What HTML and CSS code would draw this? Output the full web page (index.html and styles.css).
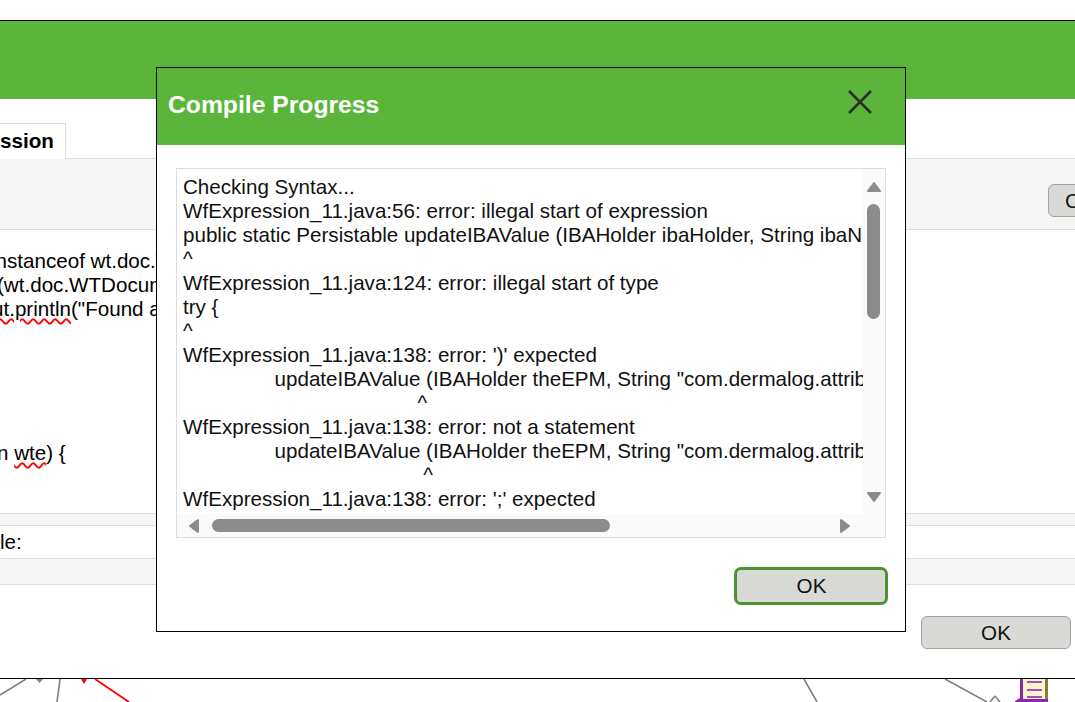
FILE: index.html
```html
<!DOCTYPE html>
<html lang="en">
<head>
<meta charset="utf-8">
<title>Compile Progress</title>
<link rel="stylesheet" href="styles.css">
</head>
<body>
<div class="page">
  <div class="window">
    <div class="banner"></div>
    <div class="tabs"><div class="tab">ssion</div></div>
    <div class="toolbar"><button class="btn btn-check">C</button></div>
    <div class="editor">
      <div class="code-line l1">instanceof wt.doc.WTDocument) {</div>
      <div class="code-line l2">(wt.doc.WTDocument)primaryBusinessObject;</div>
      <div class="code-line l3"><span class="spell">ut.println</span>("Found a document");</div>
      <div class="code-line"></div>
      <div class="code-line"></div>
      <div class="code-line"></div>
      <div class="code-line"></div>
      <div class="code-line"></div>
      <div class="code-line l4">n <span class="spell">wte</span>) {</div>
    </div>
    <div class="strip"></div>
    <div class="file-row"><span class="file-label">le:</span></div>
    <div class="strip2"></div>
    <div class="actions"><button class="btn btn-ok">OK</button></div>
  </div>
  <svg class="diagram" viewBox="0 0 1075 23" width="1075" height="23" aria-hidden="true">
    <g fill="none" stroke="#808080" stroke-width="1.6">
      <path d="M0 16 26 0"/>
      <path d="M60 0 57 23"/>
      <path d="M804 0 817 23"/>
      <path d="M945 0 987 23"/>
      <path d="M995 17 990 23M995 17 1000 23"/>
    </g>
    <path d="M36 0h7l-3.500 4z" fill="#808080"/>
    <path d="M81 0h6l-3 5z" fill="#f00"/>
    <path d="M95 0 129 23" fill="none" stroke="#f00" stroke-width="1.800"/>
    <path d="M1020 0h28v23h-33v-1l5-3z" fill="#8a2aa8"/>
    <path d="M1023 0h22v20h-22z" fill="#fbf6c8"/>
    <path d="M1045 0h3v20h-3z" fill="#8b7a3c"/>
    <path d="M1027 3h15M1027 11h15M1027 18h15" stroke="#a64dbd" stroke-width="2"/>
  </svg>

  <div class="modal">
    <div class="modal-head">
      <h1 class="modal-title">Compile Progress</h1>
      <svg class="close" viewBox="0 0 24 24" width="24" height="24" aria-hidden="true"><path d="M1 1 23 23M23 1 1 23" fill="none" stroke="#2b2b2b" stroke-width="2.500"/></svg>
    </div>
    <div class="modal-body">
      <div class="log">
        <div class="log-main">
          <pre class="log-text">Checking Syntax...
WfExpression_11.java:56: error: illegal start of expression
public static Persistable updateIBAValue (IBAHolder ibaHolder, String ibaName, String ibaValue)
^
WfExpression_11.java:124: error: illegal start of type
try {
^
WfExpression_11.java:138: error: ')' expected
                updateIBAValue (IBAHolder theEPM, String "com.dermalog.attribute", value);
                                         ^
WfExpression_11.java:138: error: not a statement
                updateIBAValue (IBAHolder theEPM, String "com.dermalog.attribute", value);
                                          ^
WfExpression_11.java:138: error: ';' expected</pre>
          <div class="vbar">
            <svg class="arrow arrow-up" viewBox="0 0 16 12" width="16" height="12" aria-hidden="true"><path d="M8 2 14 10H2z"/></svg>
            <span class="vthumb"></span>
            <svg class="arrow arrow-down" viewBox="0 0 16 12" width="16" height="12" aria-hidden="true"><path d="M8 10 14 2H2z"/></svg>
          </div>
        </div>
        <div class="hbar">
          <svg class="arrow" viewBox="0 0 12 16" width="12" height="16" aria-hidden="true"><path d="M2 8 10 2V14z"/></svg>
          <span class="hthumb"></span>
          <svg class="arrow arrow-right" viewBox="0 0 12 16" width="12" height="16" aria-hidden="true"><path d="M10 8 2 2V14z"/></svg>
        </div>
      </div>
      <div class="modal-foot"><button class="btn btn-focus">OK</button></div>
    </div>
  </div>
</div>
</body>
</html>
```
FILE: styles.css
```css
* { box-sizing: border-box; }
html, body { margin: 0; padding: 0; background: #fff; }
body { font-family: "Liberation Sans", Arial, sans-serif; color: #000; }
.page { position: relative; width: 1075px; height: 702px; overflow: hidden; background: #fff; padding-top: 20px; }
.window { height: 659px; border-top: 1px solid #000; border-bottom: 1px solid #000; display: flex; flex-direction: column; background: #fff; }
.banner { height: 78px; background: #5bb53b; flex: none; }
.tabs { height: 60px; flex: none; padding-top: 24px; display: flex; border-bottom: 1px solid #ddd; }
.tab { width: 66px; height: 36px; margin-bottom: -1px; border: 1px solid #ddd; border-left: 0; border-bottom: 0; background: #fff; font-size: 20.600px; font-weight: 700; line-height: 33px; text-align: right; padding-right: 12px; }
.toolbar { height: 71px; flex: none; background: #f6f6f6; border-bottom: 1px solid #ddd; padding: 25px 0 0 1048px; overflow: hidden; }
.btn { font-family: inherit; font-size: 20.600px; color: #111; background: #d9dad6; border: 1px solid #a3a3a3; border-radius: 6px; padding: 0; display: block; }
.btn-check { width: 60px; height: 33px; text-align: left; padding-left: 16px; }
.editor { height: 283px; flex: none; padding-top: 19px; font-size: 20.600px; line-height: 24px; overflow: hidden; }
.code-line { height: 24px; white-space: nowrap; }
.l1 { margin-left: -9px; }
.l2 { margin-left: -3px; }
.l3 { margin-left: -8px; }
.l4 { margin-left: -3px; }
.spell { text-decoration: underline wavy #f00 2px; text-underline-offset: 2px; }
.strip { height: 13px; flex: none; background: #f6f6f6; border-top: 1px solid #ddd; border-bottom: 1px solid #ddd; }
.file-row { height: 32px; flex: none; font-size: 20.600px; line-height: 32px; }
.strip2 { height: 27px; flex: none; background: #f6f6f6; border-top: 1px solid #ddd; border-bottom: 1px solid #ddd; }
.actions { flex: 1; padding: 31px 0 0 921px; }
.btn-ok { width: 150px; height: 33px; }
.diagram { display: block; }

.modal { position: absolute; left: 156px; top: 67px; width: 750px; height: 565px; background: #fff; border: 1px solid #000; display: flex; flex-direction: column; }
.modal-head { height: 77px; flex: none; background: #5bb53b; display: flex; align-items: center; justify-content: space-between; padding: 0 33px 0 11px; }
.modal-title { margin: 0 0 4px; font-size: 24.700px; font-weight: 700; color: #fff; line-height: 28px; }
.close { display: block; margin-bottom: 10px; }
.modal-body { flex: 1; padding: 23px 19px 0 19px; }
.log { width: 710px; height: 370px; border: 1px solid #ddd; background: #fafafa; display: flex; flex-direction: column; }
.log-main { height: 345px; flex: none; display: flex; }
.log-text { width: 686px; height: 345px; margin: 0; padding: 6px 0 0 6px; background: #fff; overflow: hidden; font-family: inherit; font-size: 20.600px; line-height: 24px; color: #111; white-space: pre; }
.vbar { flex: 1; display: flex; flex-direction: column; align-items: center; padding: 12px 2px 0 0; background: #fafafa; }
.arrow { display: block; flex: none; fill: #8c8c8c; stroke: #8c8c8c; stroke-width: 2; stroke-linejoin: round; }
.arrow-up { margin-left: 1px; }
.vthumb { display: block; width: 13px; height: 115px; margin-top: 11px; background: #8c8c8c; border-radius: 7px; flex: none; }
.arrow-down { margin: 172px 0 0 1px; }
.hbar { flex: 1; display: flex; align-items: center; padding-left: 11px; background: #fafafa; }
.hthumb { display: block; width: 398px; height: 13px; margin-left: 12px; background: #8c8c8c; border-radius: 7px; flex: none; }
.arrow-right { margin-left: 229px; }
.modal-foot { padding: 29px 0 0 558px; }
.btn-focus { width: 154px; height: 38px; border: 3px solid #4e9333; border-radius: 7px; padding-left: 1px; }
```
